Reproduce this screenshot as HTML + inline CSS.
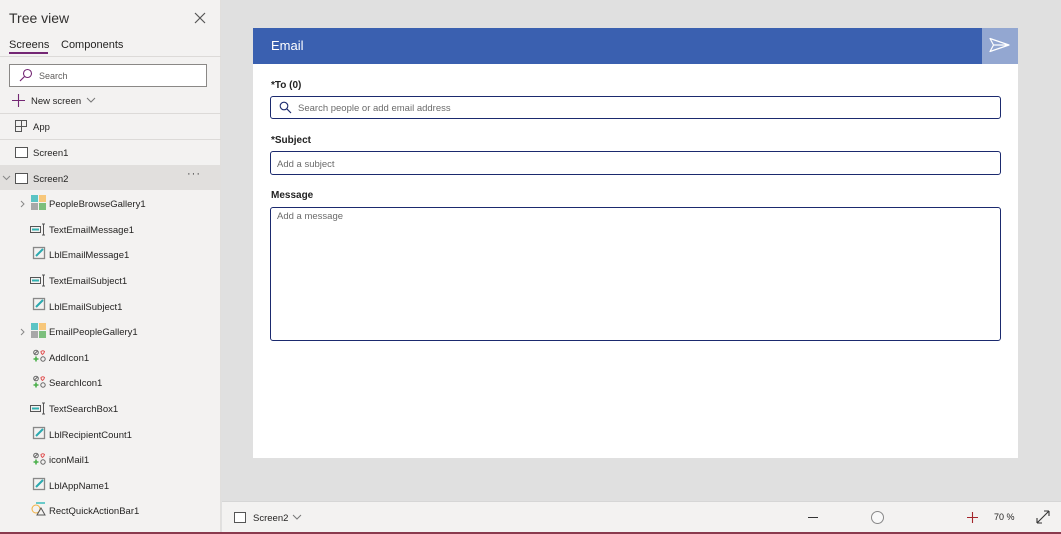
<!DOCTYPE html>
<html><head><meta charset="utf-8"><style>
*{margin:0;padding:0;box-sizing:border-box}
body{width:1061px;height:534px;overflow:hidden;background:#e0e0e0;font-family:"Liberation Sans",sans-serif;position:relative;color:#252423}
.a{position:absolute}
.left{left:0;top:0;width:221px;height:532px;background:#f3f2f1;border-right:1px solid #e1dfdd}
.t{font-size:9.5px;color:#252423;white-space:nowrap}
.sep{position:absolute;left:0;width:221px;height:1px;background:#dcdad8}
.lbl{font-size:10px;font-weight:bold;color:#222}
.inp{position:absolute;left:270px;width:731px;border:1px solid #1b2a6e;border-radius:3px;background:#fff;font-size:10px;color:#777}
</style></head><body>
<div class="a left">
  <div class="a" style="left:9px;top:10px;font-size:14px;color:#323130">Tree view</div>
  <svg class="a" style="left:194px;top:12px" width="12" height="12"><path d="M1 1L11 11M11 1L1 11" stroke="#555" stroke-width="1.2"/></svg>
  <div class="a t" style="left:9px;top:39px;font-size:11px">Screens</div>
  <div class="a" style="left:9px;top:52px;width:39px;height:2px;background:#742774"></div>
  <div class="a t" style="left:61px;top:39px;font-size:11px">Components</div>
  <div class="sep" style="top:56px"></div>
  <div class="a" style="left:9px;top:64px;width:198px;height:23px;border:1px solid #8a8886;background:#fff"></div>
  <svg class="a" style="left:19px;top:68px" width="14" height="14"><circle cx="8.5" cy="5.5" r="4" fill="none" stroke="#742774" stroke-width="1.1"/><path d="M5.5 8.5L1 13" stroke="#742774" stroke-width="1.2"/></svg>
  <div class="a t" style="left:39px;top:71px;font-size:9px;color:#605e5c">Search</div>
  <svg class="a" style="left:12px;top:94px" width="13" height="13"><path d="M6.5 0V13M0 6.5H13" stroke="#742774" stroke-width="1.1"/></svg>
  <div class="a t" style="left:31px;top:96px">New screen</div>
  <svg class="a" style="left:86px;top:97px" width="10" height="6"><path d="M1 1L5 5L9 1" stroke="#777" fill="none"/></svg>
  <div class="sep" style="top:113px"></div>
  <svg class="a" style="left:15px;top:120px" width="12" height="12"><path d="M0.5 0.5H11.5V6.5H6.5V11.5H0.5ZM6.5 0.5V6.5M0.5 6.5H6.5" fill="none" stroke="#555"/></svg>
  <div class="a t" style="left:33px;top:122px">App</div>
  <div class="sep" style="top:139px"></div>
  <svg class="a" style="left:15px;top:147px" width="13" height="11"><rect x="0.5" y="0.5" width="12" height="10" fill="#fff" stroke="#555"/></svg>
  <div class="a t" style="left:33px;top:148px">Screen1</div>
  <div class="a" style="left:0;top:165px;width:221px;height:25px;background:#e1dfdd"></div>
  <svg class="a" style="left:2px;top:175px" width="9" height="6"><path d="M1 1L4.5 4.5L8 1" stroke="#888" fill="none"/></svg>
  <svg class="a" style="left:15px;top:173px" width="13" height="11"><rect x="0.5" y="0.5" width="12" height="10" fill="#fff" stroke="#555"/></svg>
  <div class="a t" style="left:33px;top:174px">Screen2</div>
  <div class="a" style="left:187px;top:168px;font-size:11px;color:#333;letter-spacing:1px">···</div>
</div>

<svg class="a" style="left:0;top:190px" width="221" height="335">
  <defs>
    <g id="gal"><path d="M2 0L5 3L2 6" stroke="#888" fill="none" transform="translate(-12,2)"/><rect x="0" y="-4" width="7" height="7" fill="#5bc4c4"/><rect x="8" y="-4" width="7" height="7" fill="#f7c77a"/><rect x="0" y="4" width="7" height="7" fill="#a8a8a8"/><rect x="8" y="4" width="7" height="7" fill="#7cbf7c"/></g>
    <g id="txt"><rect x="0.5" y="0.5" width="10" height="6" fill="none" stroke="#555"/><rect x="2" y="2.5" width="7" height="2" fill="#30b0b0"/><path d="M12 -2H15M13.5 -2V9M12 9H15" stroke="#555" fill="none"/></g>
    <g id="lab"><rect x="0.5" y="0.5" width="11" height="11" fill="none" stroke="#888" stroke-width="1.3"/><path d="M3 9L10 2" stroke="#2aaab0" stroke-width="2"/></g>
    <g id="ico"><circle cx="3" cy="2.5" r="2.3" fill="none" stroke="#666"/><path d="M1.5 4L4.5 1" stroke="#666"/><path d="M8 1.5Q10 0 11.5 1.5Q11 3.5 9.5 4.5Q8 3.5 8 1.5Z" fill="none" stroke="#e05050"/><path d="M3 6.5V11.5M0.5 9H5.5" stroke="#4ab04a" stroke-width="1.6"/><circle cx="10" cy="9" r="2.2" fill="none" stroke="#666"/></g>
    <g id="rct"><path d="M5 0H14" stroke="#3bbcbc" stroke-width="1.5"/><circle cx="5" cy="6" r="4" fill="none" stroke="#f0b040"/><path d="M6 12L10 5L14 12Z" fill="none" stroke="#555"/></g>
  </defs>
  <use href="#gal" x="31" y="9"/>
  <use href="#txt" x="30" y="36"/>
  <use href="#lab" x="33" y="57"/>
  <use href="#txt" x="30" y="87"/>
  <use href="#lab" x="33" y="108"/>
  <use href="#gal" x="31" y="137"/>
  <use href="#ico" x="33" y="160"/>
  <use href="#ico" x="33" y="186"/>
  <use href="#txt" x="30" y="215"/>
  <use href="#lab" x="33" y="237"/>
  <use href="#ico" x="33" y="263"/>
  <use href="#lab" x="33" y="288"/>
  <use href="#rct" x="31" y="313"/>
</svg>
<div class="a t" style="left:49px;top:199px">PeopleBrowseGallery1</div>
<div class="a t" style="left:49px;top:225px">TextEmailMessage1</div>
<div class="a t" style="left:49px;top:250px">LblEmailMessage1</div>
<div class="a t" style="left:49px;top:276px">TextEmailSubject1</div>
<div class="a t" style="left:49px;top:302px">LblEmailSubject1</div>
<div class="a t" style="left:49px;top:327px">EmailPeopleGallery1</div>
<div class="a t" style="left:49px;top:353px">AddIcon1</div>
<div class="a t" style="left:49px;top:378px">SearchIcon1</div>
<div class="a t" style="left:49px;top:404px">TextSearchBox1</div>
<div class="a t" style="left:49px;top:430px">LblRecipientCount1</div>
<div class="a t" style="left:49px;top:455px">iconMail1</div>
<div class="a t" style="left:49px;top:481px">LblAppName1</div>
<div class="a t" style="left:49px;top:506px">RectQuickActionBar1</div>

<div class="a" style="left:253px;top:28px;width:765px;height:430px;background:#fff"></div>
<div class="a" style="left:253px;top:28px;width:729px;height:36px;background:#3a60b0"></div>
<div class="a" style="left:982px;top:28px;width:36px;height:36px;background:#93a7d1"></div>
<svg class="a" style="left:989px;top:37px" width="22" height="17"><path d="M1 1.5L20 8L1 14.5L4.5 8Z M4.5 8H20" fill="none" stroke="#fff" stroke-width="1.2" stroke-linejoin="round"/></svg>
<div class="a" style="left:271px;top:38px;font-size:13px;color:#fff">Email</div>
<div class="a lbl" style="left:271px;top:80px">*To (0)</div>
<div class="inp" style="top:96px;height:23px"></div>
<svg class="a" style="left:279px;top:101px" width="13" height="13"><circle cx="5" cy="5" r="3.8" fill="none" stroke="#1b2a6e" stroke-width="1.1"/><path d="M7.8 7.8L12 12" stroke="#1b2a6e" stroke-width="1.2"/></svg>
<div class="a t" style="left:298px;top:103px;color:#6b6b6b;font-size:9.5px">Search people or add email address</div>
<div class="a lbl" style="left:271px;top:135px">*Subject</div>
<div class="inp" style="top:151px;height:24px"></div>
<div class="a t" style="left:277px;top:159px;color:#6b6b6b;font-size:9.5px">Add a subject</div>
<div class="a lbl" style="left:271px;top:190px">Message</div>
<div class="inp" style="top:207px;height:134px"></div>
<div class="a t" style="left:277px;top:211px;color:#6b6b6b;font-size:9.5px">Add a message</div>

<div class="a" style="left:222px;top:501px;width:839px;height:31px;background:#f3f2f1;border-top:1px solid #d6d6d6"></div>
<div class="a" style="left:0;top:532px;width:1061px;height:2px;background:#8a3a4e"></div>
<svg class="a" style="left:234px;top:512px" width="12" height="11"><rect x="0.5" y="0.5" width="11" height="10" fill="#fff" stroke="#555"/></svg>
<div class="a t" style="left:253px;top:513px;font-size:9.5px">Screen2</div>
<svg class="a" style="left:292px;top:514px" width="10" height="6"><path d="M1 1L5 5L9 1" stroke="#777" fill="none"/></svg>
<div class="a" style="left:808px;top:517px;width:10px;height:1px;background:#333"></div>
<div class="a" style="left:871px;top:511px;width:13px;height:13px;border:1px solid #888;border-radius:50%;background:#f8f8f8"></div>
<svg class="a" style="left:967px;top:512px" width="11" height="11"><path d="M5.5 0V11M0 5.5H11" stroke="#a4262c" stroke-width="1.1"/></svg>
<div class="a t" style="left:994px;top:512px;font-size:9px">70 %</div>
<svg class="a" style="left:1036px;top:510px" width="14" height="14"><path d="M1 13L13 1M13 1H8M13 1V6M1 13H6M1 13V8" stroke="#333" fill="none" stroke-width="1.1"/></svg>
</body></html>
